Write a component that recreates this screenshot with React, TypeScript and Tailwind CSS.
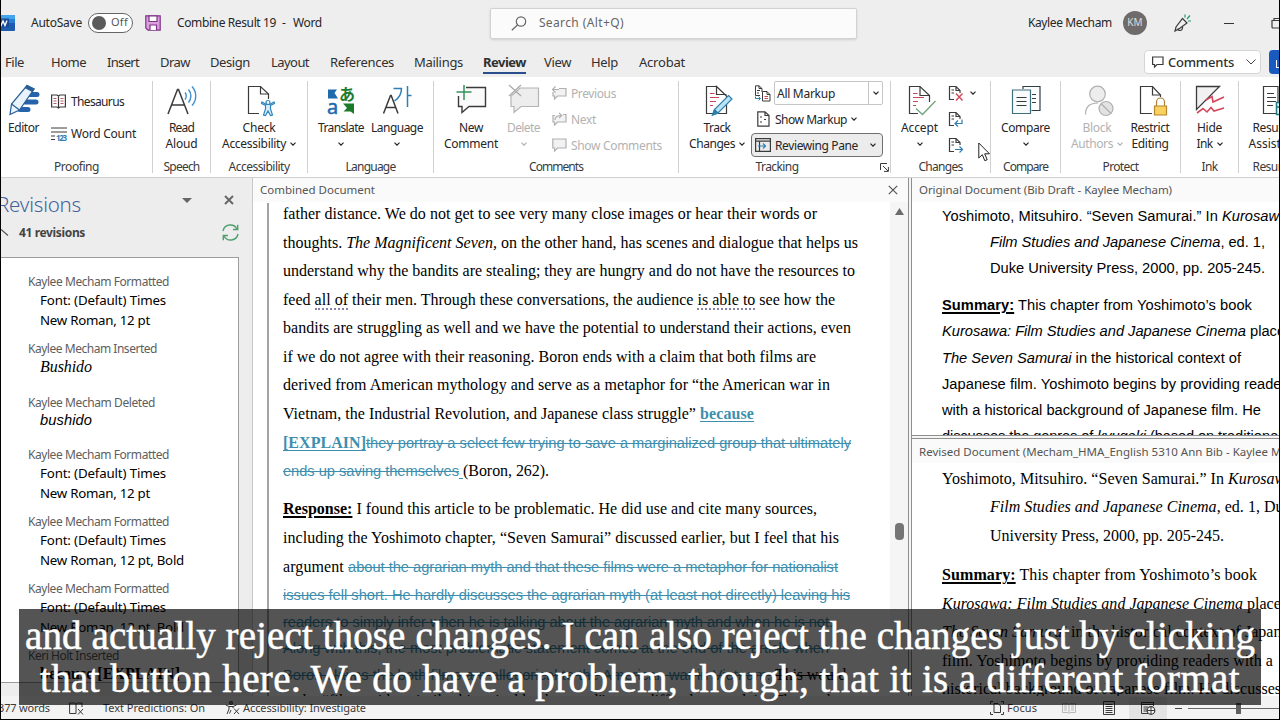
import { useLayoutEffect, useRef } from "react";
import type { ReactNode } from "react";
import clsx from "clsx";

// Tracks the letters in or out so that the run of text takes `w` pixels.
function Fit({ w, className, children }: { w: number; className?: string; children: ReactNode }) {
  const ref = useRef<HTMLSpanElement>(null);

  useLayoutEffect(() => {
    const el = ref.current;
    if (!el) return;
    el.style.letterSpacing = "0px";
    const natural = el.getBoundingClientRect().width;
    const count = el.textContent?.length || 1;
    el.style.letterSpacing = `${(w - natural) / count}px`;
  }, [w]);

  return (
    <span ref={ref} className={clsx("inline-block shrink-0 whitespace-pre", className)}>
      {children}
    </span>
  );
}

function Chevron({ className }: { className?: string }) {
  return (
    <svg width="6" height="4" viewBox="0 0 6 4" className={clsx("shrink-0", className)} fill="none" stroke="currentColor" strokeWidth="1.2">
      <path d="M0.5 0.7 3 3.2 5.5 0.7" />
    </svg>
  );
}

type IconProps = { w: number; h: number; className?: string; children: ReactNode };

function Icon({ w, h, className, children }: IconProps) {
  return (
    <svg width={w} height={h} viewBox={`0 0 ${w} ${h}`} className={clsx("shrink-0 overflow-visible", className)} fill="none" stroke="#3b3b3b" strokeWidth="1.2">
      {children}
    </svg>
  );
}

const EditorIcon = () => (
  <Icon w={32} h={32}>
    <path d="M20 10.500H29M17 18H28M12 25.500H20" stroke="#2564ac" strokeWidth="5" strokeLinecap="round" />
    <path d="M19 1.500 26 5 11.500 26 2 30.500 3.500 20Z" fill="#e9f3fb" stroke="#2b5f97" />
    <path d="M19 1.500 26 5 24.500 7.500 17.500 3.800Z" fill="#2b5f97" stroke="#2b5f97" />
    <path d="M3.500 20 11.500 26" stroke="#2b5f97" />
  </Icon>
);

const ReadAloudIcon = () => (
  <Icon w={32} h={32}>
    <path d="M2 30 11.500 5.500H12.500L22 30M5.500 21H18.500" strokeWidth="1.500" />
    <path d="M19 8.500a6 6 0 0 1 0 7M22.500 5.500a10 10 0 0 1 0 13M26 2.500a14 14 0 0 1 0 19" stroke="#3f8fd0" strokeWidth="1.400" />
  </Icon>
);

const AccessibilityIcon = () => (
  <Icon w={32} h={32}>
    <path d="M16 29.500H5.500V2.500H17.500L25.500 10V15" />
    <path d="M17.500 2.500V10H25.500" />
    <circle cx="25" cy="18.500" r="2" fill="#fff" stroke="#2f86bd" />
    <path d="M18.500 19.500 22.500 21.500V25L20.500 31 22.500 31.500 25 27 27.500 31.500 29.500 31 27.500 25V21.500L31.500 19.500 31 18 27 20.500H23L19 18Z" fill="#d9eefa" stroke="#2f86bd" />
  </Icon>
);

const TranslateIcon = () => (
  <Icon w={32} h={32}>
    <path d="M3 5.500H12L9.500 9 13 14.500H3Z" fill="#1f69ad" stroke="none" />
    <path d="M18 19.500H29V30L25.500 27.500H18.500L22 24Z" fill="#1c7a2b" stroke="none" />
    <text x="14" y="15.500" fill="#1c7a2b" stroke="none" fontSize="16" fontWeight="bold" fontFamily="Noto Sans CJK JP, sans-serif">あ</text>
    <text x="2" y="30" fill="#1f69ad" stroke="#1f69ad" strokeWidth="0.500" fontSize="20" fontFamily="Noto Sans, sans-serif">a</text>
  </Icon>
);

const LanguageIcon = () => (
  <Icon w={32} h={32}>
    <path d="M2.500 29.500 9.500 11.500H10.200L17 29.500M5 23.500H14.500" strokeWidth="1.500" />
    <path d="M12.500 4.500H20.500C20.500 10 18 14 13.500 17M26.500 2V23M26.500 11.500H30.500" stroke="#2f7fb5" strokeWidth="1.500" />
  </Icon>
);

const NewCommentIcon = () => (
  <Icon w={32} h={32}>
    <path d="M11 3.500H30.500V22.500H14L7 28.500V22.500H3.500V12" fill="#fafafa" strokeWidth="1.400" />
    <path d="M9 1V16M1.500 8H16.500" stroke="#36915a" strokeWidth="1.500" />
  </Icon>
);

const DeleteIcon = () => (
  <Icon w={32} h={32}>
    <path d="M3 12V22.500H6V28.500L13 22.500H30.500V4H12L8 8Z" fill="#ededed" stroke="#b4b4b4" />
    <path d="M1 1 13 12M13 1 1 12" stroke="#a8a8a8" />
  </Icon>
);

const TrackIcon = () => (
  <Icon w={32} h={32}>
    <path d="M15 2.500H5.500V29.500H25.500V12L15.500 2.500V10.500H25.500" />
    <path d="M9 9.500H13.500M9 13.500H18M9 17.500H15M9 21.500H12" stroke="#c84a5d" />
    <path d="M27.500 11.500 31 15 17 29 11.500 31 13.500 25.500Z" fill="#b9e3f7" stroke="#2d7fa8" />
    <path d="M11.500 31 13.500 25.500 17 29Z" fill="#2d7fa8" stroke="#2d7fa8" />
  </Icon>
);

const AcceptIcon = () => (
  <Icon w={32} h={32}>
    <path d="M14 29.500H5.500V2.500H16L25.500 11.500V18" />
    <path d="M16 2.500V11.500H25.500" />
    <path d="M9 9.500H13.500M9 13.500H20M9 17.500H14M9 21.500H12" stroke="#c84a5d" />
    <path d="M12 24.500 18.500 30.500 31.500 17" stroke="#74a67d" strokeWidth="1.400" />
  </Icon>
);

const CompareIcon = () => (
  <Icon w={32} h={32}>
    <path d="M13 5V2.500H30V26.500H21.500M22 10.500H26M22 14.500H26M22 18.500H26" stroke="#2f4048" />
    <path d="M2.500 6H20.500V29.500H2.500Z" fill="#f8fbfc" stroke="#3d6f7c" />
    <path d="M6.500 13.500H16.500M6.500 17.500H16.500M6.500 21.500H16.500" />
  </Icon>
);

const BlockIcon = () => (
  <Icon w={32} h={32}>
    <circle cx="16.500" cy="10" r="7.800" fill="#ededed" stroke="#b0b0b0" />
    <path d="M4.500 30.500C4.500 22 9.500 19 17 19" stroke="#b0b0b0" />
    <circle cx="25" cy="24.500" r="7" fill="#e2e2e2" stroke="#b0b0b0" />
    <path d="M20 19.500 30 29.500" stroke="#b0b0b0" />
  </Icon>
);

const RestrictIcon = () => (
  <Icon w={32} h={32}>
    <path d="M18 29.500H6.500V2.500H18.500L26.500 11V13" />
    <path d="M18.500 2.500V11H26.500" />
    <path d="M22.500 22V18a4 4 0 0 1 8 0V22" stroke="#a8843a" />
    <path d="M20.500 22H32.500V31H20.500Z" fill="#f8d15e" stroke="#b8862c" />
  </Icon>
);

const HideInkIcon = () => (
  <Icon w={32} h={32}>
    <path d="M2.500 25.500V2.500H25.500Z" fill="#f1f1f1" strokeWidth="1.300" />
    <path d="M3 29 9 24.500 13 28 17 23.500 20 27 30 24M12 16 18 12.500 19 18 30 13" stroke="#d4475a" strokeWidth="1.600" />
  </Icon>
);

const ResumeIcon = () => (
  <Icon w={32} h={32}>
    <path d="M5.500 2.500H20V29.500H5.500ZM9 9.500H16M9 13.500H18M9 17.500H18M9 21.500H15" />
    <path d="M18.500 18.500H31V30.500H18.500ZM18.500 23H31" fill="#e6f4f5" stroke="#227883" strokeWidth="1.500" />
  </Icon>
);

const PageOutline = () => <path d="M6 14.500H1.500V1.500H8L12 5.500V8M8 1.500V5.500H12" />;

type Label = { text: string; w: number };

type BigButtonProps = {
  icon: ReactNode;
  width: string;
  first: Label;
  second?: Label;
  chevron?: boolean;
  disabled?: boolean;
};

function BigButton({ icon, width, first, second, chevron, disabled }: BigButtonProps) {
  return (
    <button className={clsx("flex shrink-0 flex-col items-center pt-[3px] leading-4", width, disabled ? "text-[#b2b2b2]" : "text-[#262626]")}>
      {icon}
      <Fit w={first.w} className="mt-1">{first.text}</Fit>
      <span className="flex h-4 items-center justify-center gap-1">
        {second && <Fit w={second.w}>{second.text}</Fit>}
        {chevron && <Chevron />}
      </span>
    </button>
  );
}

function Group({ label, w, width, pad, children, extra }: { label: string; w: number; width: string; pad?: string; children: ReactNode; extra?: ReactNode }) {
  return (
    <section className={clsx("flex h-[92px] shrink-0 flex-col border-r border-[#d0d0d0]", width)}>
      <div className={clsx("flex h-[78px] shrink-0", pad ?? "justify-center")}>{children}</div>
      <div className="flex h-4 shrink-0 items-center justify-center text-[#3a3a3a]">
        <Fit w={w} className="leading-4">{label}</Fit>
        {extra}
      </div>
    </section>
  );
}

const tabs = [
  { name: "File", w: 19, gap: "ml-1" },
  { name: "Home", w: 35, gap: "ml-[27px]" },
  { name: "Insert", w: 32, gap: "ml-[21px]" },
  { name: "Draw", w: 30, gap: "ml-[21px]" },
  { name: "Design", w: 40, gap: "ml-5" },
  { name: "Layout", w: 38, gap: "ml-[21px]" },
  { name: "References", w: 64, gap: "ml-[21px]" },
  { name: "Mailings", w: 49, gap: "ml-5" },
  { name: "Review", w: 43, gap: "ml-5", active: true },
  { name: "View", w: 27, gap: "ml-[18px]" },
  { name: "Help", w: 27, gap: "ml-5" },
  { name: "Acrobat", w: 46, gap: "ml-[21px]" },
];

function TitleBar() {
  return (
    <header className="flex h-[46px] shrink-0 items-center text-xs text-[#262626]">
      <svg width="14" height="16" viewBox="0 0 14 16" className="shrink-0">
        <path d="M0 0H13a1 1 0 0 1 1 1V15a1 1 0 0 1-1 1H0Z" fill="#1f5cb0" />
        <path d="M0 0H13a1 1 0 0 1 1 1V4.500H0Z" fill="#41a5ee" />
        <path d="M0 4.500H14V8H0Z" fill="#2b7cd3" />
        <path d="M0 3.500H8V12.500H0Z" fill="#174a96" />
        <path d="M-2 5.500 0 10.500 2 6 4 10.500 6 5.500" fill="none" stroke="#fff" strokeWidth="1.400" />
      </svg>
      <Fit w={51} className="ml-4">AutoSave</Fit>
      <div className="-mt-px ml-[6px] flex h-[20px] w-[45px] shrink-0 items-center rounded-full border border-[#666] bg-white pl-[3px] text-[11px] text-[#555]">
        <span className="mr-[5px] size-[14px] rounded-full bg-[#5c5c5c]" />
        <Fit w={17}>Off</Fit>
      </div>
      <Icon w={16} h={16} className="ml-3">
        <path d="M0.800 0.800H15.200V15.200H3L0.800 13Z" fill="#d9a0dc" stroke="#7f3389" />
        <path d="M4 0.800H12V6.500H4ZM5 15V10H11.500V15" fill="#fff" stroke="#7f3389" />
      </Icon>
      <Fit w={99} className="ml-4">Combine Result 19</Fit>
      <span className="ml-[6px]">-</span>
      <Fit w={29} className="ml-[7px]">Word</Fit>
      <div className="ml-[168px] flex h-[31px] w-[367px] shrink-0 items-center rounded-xs border border-[#d2d2d2] bg-[#fbfbfb] pl-5 text-[#666] shadow-sm">
        <Icon w={16} h={15}>
          <circle cx="10" cy="5.500" r="4.700" stroke="#666" />
          <path d="M6.500 9 0.800 14.300" stroke="#666" />
        </Icon>
        <Fit w={85} className="ml-3">Search (Alt+Q)</Fit>
      </div>
      <Fit w={84} className="ml-[171px]">Kaylee Mecham</Fit>
      <div className="ml-[11px] flex size-6 shrink-0 items-center justify-center rounded-full bg-[#6f6b6b] text-[10px] text-[#ddd]">KM</div>
      <Icon w={18} h={18} className="ml-[27px]">
        <path d="M8.500 4.500 13 9 5.500 14.500 1 17 2 13Z" />
        <path d="M4 14.500C4 17 8 17.500 8.500 14V12.500" />
        <path d="M11 3.500V0.500M13 5 16 1.500M14 7H17" stroke="#26966b" />
      </Icon>
      <span className="ml-[32px] h-px w-[10px] shrink-0 bg-[#333]" />
      <Icon w={12} h={12} className="ml-[37px]">
        <path d="M1 3.500H9V11H2a1 1 0 0 1-1-1ZM3 3V1.500H12" />
      </Icon>
    </header>
  );
}

function TabBar() {
  return (
    <nav className="flex h-[31px] shrink-0 items-start text-[13px] text-[#303030]">
      {tabs.map((t) => (
        <span key={t.name} className={clsx("flex h-[30px] shrink-0 flex-col pt-[7px]", t.gap)}>
          <Fit w={t.w} className={clsx("leading-[18px]", t.active && "font-bold")}>{t.name}</Fit>
          {t.active && <span className="mt-px h-[2px] bg-[#2b4f8c]" />}
        </span>
      ))}
      <button className="mt-1 ml-[459px] flex h-[24px] w-[117px] shrink-0 items-center rounded border border-[#d5d5d5] bg-white pl-[7px] font-medium">
        <Icon w={12} h={12}>
          <path d="M0.600 1H11V8.500H5L2.500 11V8.500H0.600Z" />
        </Icon>
        <Fit w={66} className="ml-1 pt-px">Comments</Fit>
        <svg width="10" height="6" viewBox="0 0 10 6" className="ml-3" fill="none" stroke="#444">
          <path d="M0.500 0.500 5 5 9.500 0.500" />
        </svg>
      </button>
      <span className="mt-1 ml-2 flex h-[24px] w-[12px] shrink-0 items-center rounded-l bg-[#185abd] pl-[7px]">
        <span className="mt-1 h-2 w-[5px] border-b border-l border-white" />
      </span>
    </nav>
  );
}

function Ribbon() {
  return (
    <div className="flex h-[101px] shrink-0 overflow-hidden border-b border-[#cfcfcf] bg-white pt-1 text-[12px]">
      <Group label="Proofing" w={45} width="w-[152px]" pad="pl-1">
        <BigButton icon={<EditorIcon />} width="w-[37px]" first={{ text: "Editor", w: 31 }} />
        <div className="ml-[9px] flex flex-col gap-4 pt-[13px] leading-4 text-[#262626]">
          <span className="flex h-4 items-center">
            <Icon w={15} h={15} className="-mt-px">
              <path d="M0.600 1H6L7.500 2 9 1H14.400V13H9L7.500 14 6 13H0.600ZM7.500 2V14" />
              <path d="M2.500 4.500H5.500M2.500 7H5.500M2.500 9.500H5.500M9.500 4.500H12.500M9.500 7H12.500M9.500 9.500H12.500" stroke="#b05a6c" strokeWidth="1" />
            </Icon>
            <Fit w={53} className="ml-[5px]">Thesaurus</Fit>
          </span>
          <span className="flex h-4 items-center">
            <Icon w={17} h={14} className="-mt-px">
              <path d="M0 1H16M0 5H16M0 9H4M0 12.500H4" strokeWidth="1" />
              <text x="5" y="13.500" fill="#2f7fb5" stroke="none" fontSize="8" fontWeight="bold" fontFamily="Noto Sans, sans-serif" textLength="11">123</text>
            </Icon>
            <Fit w={65} className="ml-[3px]">Word Count</Fit>
          </span>
        </div>
      </Group>

      <Group label="Speech" w={36} width="w-[58px]">
        <BigButton icon={<ReadAloudIcon />} width="w-[56px]" first={{ text: "Read", w: 25 }} second={{ text: "Aloud", w: 32 }} />
      </Group>

      <Group label="Accessibility" w={61} width="w-[97px]">
        <BigButton icon={<AccessibilityIcon />} width="w-[90px]" first={{ text: "Check", w: 33 }} second={{ text: "Accessibility", w: 64 }} chevron />
      </Group>

      <Group label="Language" w={50} width="w-[126px]" pad="pl-[5px]">
        <BigButton icon={<TranslateIcon />} width="w-14" first={{ text: "Translate", w: 46 }} chevron />
        <BigButton icon={<LanguageIcon />} width="w-14" first={{ text: "Language", w: 52 }} chevron />
      </Group>

      <Group label="Comments" w={54} width="w-[245px]" pad="pl-[9px]">
        <BigButton icon={<NewCommentIcon />} width="w-14" first={{ text: "New", w: 24 }} second={{ text: "Comment", w: 54 }} />
        <BigButton icon={<DeleteIcon />} width="w-[49px]" first={{ text: "Delete", w: 33 }} chevron disabled />
        <div className="ml-1 flex flex-col leading-4 text-[#b2b2b2]">
          <span className="flex h-[26px] items-center">
            <Icon w={15} h={14} className="-mt-[3px]">
              <path d="M7 2.500H14V10H5.500L2.500 13V10H1V6" fill="#f2f2f2" stroke="#b0b0b0" />
              <path d="M0.500 3.500H7M3.500 0.500 0.500 3.500 3.500 6.500" stroke="#b0b0b0" />
            </Icon>
            <Fit w={45} className="ml-1">Previous</Fit>
          </span>
          <span className="flex h-[26px] items-center">
            <Icon w={15} h={14} className="-mt-[3px]">
              <path d="M11 2.500H14V10H5.500L2.500 13V10H1V3.500H3" fill="#f2f2f2" stroke="#b0b0b0" />
              <path d="M3 8C3 5 5 3.500 9.500 3.500M7 0.800 9.700 3.500 7 6.200" stroke="#b0b0b0" />
            </Icon>
            <Fit w={25} className="ml-1">Next</Fit>
          </span>
          <span className="flex h-[26px] items-center">
            <Icon w={15} h={14} className="-mt-[3px]">
              <path d="M0.800 1H14V10H5.500L2.500 13V10H0.800Z" fill="#f2f2f2" stroke="#b0b0b0" />
            </Icon>
            <Fit w={91} className="ml-1">Show Comments</Fit>
          </span>
        </div>
      </Group>

      <Group
        label="Tracking"
        w={43}
        width="w-[212px]"
        pad="pl-2"
        extra={
          <Icon w={9} h={9} className="-mr-[75px] ml-[81px]">
            <path d="M0.500 7V0.500H7M3 3 8 8M8.400 4V8.400H4" strokeWidth="1" />
          </Icon>
        }
      >
        <BigButton icon={<TrackIcon />} width="w-[60px]" first={{ text: "Track", w: 27 }} second={{ text: "Changes", w: 46 }} chevron />
        <div className="ml-1 flex w-[132px] flex-col text-[#262626]">
          <div className="flex h-6 items-center pl-[3px]">
            <Icon w={17} h={17}>
              <path d="M6 10.500H1.500V0.800H5L8 3.500V7M5 0.800V3.500H8" strokeWidth="1" />
              <path d="M3 5.500H6M3 8H5" strokeWidth="1" />
              <path d="M8.500 6.500H13L16 9.500V16H8.500ZM13 6.500V9.500H16" fill="#fff" strokeWidth="1" />
              <path d="M10.500 11.500H14M10.500 13.500H14" stroke="#c84a5d" strokeWidth="1" />
              <path d="M1.500 11.500V13.500H6.500M4.500 11.500 6.500 13.500 4.500 15.500" stroke="#2f7fb5" strokeWidth="1" />
            </Icon>
            <div className="ml-[3px] flex h-6 w-[109px] items-center rounded-xs border border-[#c6c6c6] bg-white pl-[2px]">
              <Fit w={58} className="pt-[2px]">All Markup</Fit>
              <span className="ml-[33px] h-[22px] w-px bg-[#c6c6c6]" />
              <Chevron className="ml-[4px]" />
            </div>
          </div>
          <div className="flex h-[28px] items-center pl-[6px]">
            <Icon w={13} h={16}>
              <path d="M0.800 0.800H8L12 4.500V15.200H0.800ZM8 0.800V4.500H12" />
              <path d="M3 6H5M7 8.500H9M3 11H5" />
            </Icon>
            <Fit w={72} className="ml-[5px] pt-[2px]">Show Markup</Fit>
            <Chevron className="ml-1" />
          </div>
          <div className="flex h-[24px] items-center rounded border border-[#707070] bg-[#ececec] pl-[3px]">
            <Icon w={16} h={14}>
              <path d="M0.600 0.600H15.400V13.400H0.600ZM0.600 3.200H15.400M4.500 3.200V13" />
              <path d="M3 8H10.500M8 5.500 10.500 8 8 10.500" stroke="#2f7fb5" />
            </Icon>
            <Fit w={83} className="ml-1 pt-[2px]">Reviewing Pane</Fit>
            <Chevron className="ml-3" />
          </div>
        </div>
      </Group>

      <Group label="Changes" w={44} width="w-[100px]" pad="pl-[6px]">
        <BigButton icon={<AcceptIcon />} width="w-[45px]" first={{ text: "Accept", w: 37 }} chevron />
        <div className="-mt-px ml-[6px] flex flex-col text-[#262626]">
          <span className="flex h-[26px] items-center">
            <Icon w={16} h={16}>
              <PageOutline />
              <path d="M3.500 5H6M3.500 8H6" strokeWidth="1" />
              <path d="M8 8.500 14.500 15.500M14.500 8.500 8 15.500" stroke="#d4475a" strokeWidth="1.400" />
            </Icon>
            <Chevron className="ml-[6px]" />
          </span>
          <span className="flex h-[26px] items-center">
            <Icon w={16} h={16}>
              <PageOutline />
              <path d="M3.500 5H6M3.500 8H6" strokeWidth="1" />
              <path d="M14 8.500V12.500H7M10 9.500 7 12.500 10 15.500" stroke="#2f7fb5" />
            </Icon>
          </span>
          <span className="flex h-[26px] items-center">
            <Icon w={16} h={16}>
              <PageOutline />
              <path d="M3.500 5H6M3.500 8H6" strokeWidth="1" />
              <path d="M7 12.500H14.500M11.500 9.500 14.500 12.500 11.500 15.500" stroke="#2f7fb5" />
            </Icon>
          </span>
        </div>
      </Group>

      <Group label="Compare" w={45} width="w-[70px]">
        <BigButton icon={<CompareIcon />} width="w-[60px]" first={{ text: "Compare", w: 49 }} chevron />
      </Group>

      <Group label="Protect" w={36} width="w-[120px]" pad="pl-2">
        <BigButton icon={<BlockIcon />} width="w-14" first={{ text: "Block", w: 29 }} second={{ text: "Authors", w: 42 }} chevron disabled />
        <BigButton icon={<RestrictIcon />} width="w-[50px]" first={{ text: "Restrict", w: 39 }} second={{ text: "Editing", w: 37 }} />
      </Group>

      <Group label="Ink" w={16} width="w-[58px]">
        <BigButton icon={<HideInkIcon />} width="w-[50px]" first={{ text: "Hide", w: 25 }} second={{ text: "Ink", w: 16 }} chevron />
      </Group>

      <Group label="Resume" w={42} width="w-[70px]" pad="pl-[10px]">
        <BigButton icon={<ResumeIcon />} width="w-[50px]" first={{ text: "Resume", w: 43 }} second={{ text: "Assistant", w: 51 }} />
      </Group>
    </div>
  );
}

const FONT_CHANGE = [
  { text: "Font: (Default) Times", w: 126 },
  { text: "New Roman, 12 pt", w: 110 },
];
const FONT_CHANGE_BOLD = [FONT_CHANGE[0], { text: "New Roman, 12 pt, Bold", w: 144 }];

const revisions = [
  { who: "Kaylee Mecham Formatted", w: 141, lines: FONT_CHANGE, height: "h-[67px]" },
  { who: "Kaylee Mecham Inserted", w: 129, lines: [{ text: "Bushido", w: 52 }], height: "h-[54px]", font: "font-['Liberation_Serif',serif] italic text-[16px]" },
  { who: "Kaylee Mecham Deleted", w: 127, lines: [{ text: "bushido", w: 52 }], height: "h-[52px]", font: "font-['Liberation_Sans',sans-serif] italic text-[14.67px] -mt-px" },
  { who: "Kaylee Mecham Formatted", w: 141, lines: FONT_CHANGE, height: "h-[67px]" },
  { who: "Kaylee Mecham Formatted", w: 141, lines: FONT_CHANGE_BOLD, height: "h-[67px]" },
  { who: "Kaylee Mecham Formatted", w: 141, lines: FONT_CHANGE_BOLD, height: "h-[67px]" },
  { who: "Keri Holt Inserted", w: 91, lines: [{ text: "because [EXPLAIN]", w: 140 }], height: "h-[54px]", font: "font-['Liberation_Serif',serif] font-bold text-[16px]" },
];

function RevisionsPane() {
  return (
    <aside className="flex w-[252px] shrink-0 flex-col border-r border-[#c8c8c8] bg-[#ededed]">
      <div className="flex h-[46px] items-center pt-[5px]">
        <Fit w={84} className="-ml-1 text-[20.5px] leading-6 font-light text-[#44639c]">Revisions</Fit>
        <svg width="10" height="5" viewBox="0 0 10 5" className="mb-[6px] ml-[101px]">
          <path d="M0 0H10L5 5Z" fill="#666" />
        </svg>
        <Icon w={10} h={10} className="mb-[8px] ml-[32px]">
          <path d="M1 1 9 9M9 1 1 9" stroke="#666" strokeWidth="1.900" />
        </Icon>
      </div>
      <div className="flex h-[17px] items-center text-xs font-bold text-[#444]">
        <Icon w={8} h={7}>
          <path d="M0 0.500 7 6.500" stroke="#555" />
        </Icon>
        <Fit w={66} className="ml-[10px] pt-px">41 revisions</Fit>
        <Icon w={17} h={17} className="ml-[137px]">
          <path d="M1 7A7.500 7.500 0 0 1 15 5M16 10A7.500 7.500 0 0 1 2 12M15.700 0.800V5.500H11M1.300 16.200V11.500H6" stroke="#4fa06e" strokeWidth="1.400" />
        </Icon>
      </div>
      <div className="mt-4 h-[426px] w-[238px] overflow-hidden border-y border-r border-[#9c9c9c] bg-white pt-[15px] text-[13.3px] text-black">
        {revisions.map((r, i) => (
          <div key={i} className={clsx("flex flex-col pl-[27px]", r.height)}>
            <Fit w={r.w} className="h-[17px] self-start text-[12px] leading-[18px] text-[#5e5e5e]">{r.who}</Fit>
            {r.lines.map((l) => (
              <Fit key={l.text} w={l.w} className={clsx("ml-3 h-5 self-start leading-5", r.font)}>{l.text}</Fit>
            ))}
          </div>
        ))}
      </div>
    </aside>
  );
}

function Struck({ w, children }: { w: number; children: ReactNode }) {
  return (
    <Fit w={w} className="font-['Liberation_Sans',sans-serif] text-[14.67px] text-[#3e8fae] line-through">
      {children}
    </Fit>
  );
}

const pitches = {
  loose: "h-[28.6px] leading-[28.6px]",
  struck: "h-[26.5px] leading-[28.6px]",
  tight: "h-[26.1px] leading-[26.1px]",
};

function Line({ pitch = "loose", className, children }: { pitch?: keyof typeof pitches; className?: string; children: ReactNode }) {
  return <div className={clsx("whitespace-nowrap", pitches[pitch], className)}>{children}</div>;
}

const grammar = "border-b-2 border-dotted border-[#8583a8]";

function CombinedDocument() {
  return (
    <main className="flex w-[655px] shrink-0 flex-col bg-white">
      <div className="flex h-6 shrink-0 items-center bg-[#fafafa] pl-[7px] text-[11.5px] text-[#555]">
        <Fit w={115}>Combined Document</Fit>
        <Icon w={10} h={10} className="ml-[513px]">
          <path d="M0.800 0.800 9.200 9.200M9.200 0.800 0.800 9.200" stroke="#555" />
        </Icon>
      </div>
      <div className="flex h-[494px] overflow-hidden">
        <div className="mt-px ml-[14px] w-[2px] shrink-0 bg-[#a3a3a3]" />
        <div className="-mt-[2.1px] ml-[14px] w-[607px] shrink-0 font-['Liberation_Serif',serif] text-[16px] text-black">
          <Line><Fit w={534}>father distance. We do not get to see very many close images or hear their words or</Fit></Line>
          <Line><Fit w={575}>thoughts. <i>The Magnificent Seven,</i> on the other hand, has scenes and dialogue that helps us</Fit></Line>
          <Line><Fit w={572}>understand why the bandits are stealing; they are hungry and do not have the resources to</Fit></Line>
          <Line><Fit w={552}>feed <span className={grammar}>all of</span> their men. Through these conversations, the audience <span className={grammar}>is able to</span> see how the</Fit></Line>
          <Line><Fit w={568}>bandits are struggling as well and we have the potential to understand their actions, even</Fit></Line>
          <Line><Fit w={533}>if we do not agree with their reasoning. Boron ends with a claim that both films are</Fit></Line>
          <Line><Fit w={547}>derived from American mythology and serve as a metaphor for “the American war in</Fit></Line>
          <Line>
            <Fit w={417}>Vietnam, the Industrial Revolution, and Japanese class struggle” </Fit>
            <Fit w={54} className="font-bold text-[#3e8fae] underline underline-offset-2">because</Fit>
          </Line>
          <Line>
            <Fit w={83} className="font-bold text-[#3e8fae] underline underline-offset-2">[EXPLAIN]</Fit>
            <Struck w={485}>they portray a select few trying to save a marginalized group that ultimately</Struck>
          </Line>
          <Line className="mb-[9.6px]">
            <Struck w={176}>ends up saving themselves</Struck>
            <span className="whitespace-pre text-[#3e8fae] underline underline-offset-2"> </span>
            <Fit w={86}>(Boron, 262).</Fit>
          </Line>
          <Line><Fit w={534}><b className="underline decoration-2 underline-offset-2">Response:</b> I found this article to be problematic. He did use and cite many sources,</Fit></Line>
          <Line><Fit w={556}>including the Yoshimoto chapter, “Seven Samurai” discussed earlier, but I feel that his</Fit></Line>
          <Line>
            <Fit w={65}>argument </Fit>
            <Struck w={490}>about the agrarian myth and that these films were a metaphor for nationalist</Struck>
          </Line>
          <Line pitch="struck">
            <Struck w={567}>issues fell short. He hardly discusses the agrarian myth (at least not directly) leaving his</Struck>
          </Line>
          <Line pitch="struck">
            <Struck w={550}>readers to simply infer when he is talking about the agrarian myth and when he is not.</Struck>
          </Line>
          <Line pitch="struck">
            <Struck w={546}>Along with this, the most problematic statement comes at the end of the article when</Struck>
          </Line>
          <Line pitch="struck">
            <Struck w={492}>Boron claims the both films are allegorical to the American war in Vietnam. </Struck>
            <Fit w={71} className="line-through">This would</Fit>
          </Line>
          <Line><Fit w={560}>make “films with a similar historical background” more difficult to explain. The reader</Fit></Line>
        </div>
        <div className="flex w-[18px] shrink-0 flex-col items-center bg-[#f5f5f5] pt-[6px]">
          <svg width="9" height="7" viewBox="0 0 9 7">
            <path d="M4.500 0 9 7H0Z" fill="#6b6b6b" />
          </svg>
          <span className="mt-[308px] h-[17px] w-[9px] rounded bg-[#757575]" />
        </div>
      </div>
    </main>
  );
}

function SourceDocuments() {
  return (
    <div className="flex min-w-0 flex-1 flex-col overflow-hidden">
      <section className="h-[257px] shrink-0 overflow-hidden bg-white">
        <div className="flex h-6 items-center bg-[#fafafa] pl-[7px] text-[11.5px] text-[#555]">
          <Fit w={253}>Original Document (Bib Draft - Kaylee Mecham)</Fit>
        </div>
        <div className="mt-[1.2px] pl-[30px] font-['Liberation_Sans',sans-serif] text-[14.67px] text-black">
          <Line pitch="tight"><Fit w={280}>Yoshimoto, Mitsuhiro. “Seven Samurai.” In </Fit><i>Kurosawa:</i></Line>
          <Line pitch="tight" className="pl-12"><Fit w={275}><i>Film Studies and Japanese Cinema</i>, ed. 1,</Fit></Line>
          <Line pitch="tight" className="mb-[10.9px] pl-12"><Fit w={275}>Duke University Press, 2000, pp. 205-245.</Fit></Line>
          <Line pitch="tight"><Fit w={310}><b className="underline decoration-2 underline-offset-2">Summary:</b> This chapter from Yoshimoto’s book</Fit></Line>
          <Line pitch="tight"><Fit w={308}><i>Kurosawa: Film Studies and Japanese Cinema</i> </Fit>places</Line>
          <Line pitch="tight"><Fit w={299}><i>The Seven Samurai</i> in the historical context of</Fit></Line>
          <Line pitch="tight"><Fit w={302}>Japanese film. Yoshimoto begins by providing </Fit>readers</Line>
          <Line pitch="tight"><Fit w={319}>with a historical background of Japanese film. He</Fit></Line>
          <Line pitch="tight"><Fit w={276}>discusses the genres of <i>kyugeki</i> (based on </Fit>traditional</Line>
        </div>
      </section>
      <div className="h-1 shrink-0 border-y border-[#8f8f8f] bg-[#f5f5f5]" />
      <section className="flex-1 bg-white">
        <div className="flex h-6 items-center bg-[#fafafa] pt-[2px] pl-[7px] text-[11.5px] text-[#555]">
          <Fit w={352}>Revised Document (Mecham_HMA_English 5310 Ann Bib - Kaylee </Fit>
          <span>Mecham)</span>
        </div>
        <div className="mt-[1.9px] pl-[30px] font-['Liberation_Serif',serif] text-[16px] text-black">
          <Line><Fit w={286}>Yoshimoto, Mitsuhiro. “Seven Samurai.” In </Fit><i>Kurosawa:</i></Line>
          <Line className="pl-12"><Fit w={274}><i>Film Studies and Japanese Cinema</i>, ed. 1, </Fit>Duke</Line>
          <Line className="mb-[10.4px] pl-12"><Fit w={234}>University Press, 2000, pp. 205-245.</Fit></Line>
          <Line><Fit w={315}><b className="underline decoration-2 underline-offset-2">Summary:</b> This chapter from Yoshimoto’s book</Fit></Line>
          <Line><Fit w={305}><i>Kurosawa: Film Studies and Japanese Cinema</i> </Fit>places</Line>
          <Line><Fit w={303}><i>The Seven Samurai</i> in the historical context of </Fit>Japanese</Line>
          <Line><Fit w={331}>film. Yoshimoto begins by providing readers with a</Fit></Line>
          <Line><Fit w={339}>historical background of Japanese film. He discusses</Fit></Line>
        </div>
      </section>
    </div>
  );
}

function StatusBar() {
  return (
    <footer className="flex h-[23px] shrink-0 items-center bg-[#f3f3f3] pt-px text-[11px] text-[#3a3a3a]">
      <Fit w={52} className="-ml-[3px]">377 words</Fit>
      <Icon w={15} h={13} className="ml-[19px]">
        <path d="M7 2V11.500H0.600V1H5.500L7 2 8.500 1H13V5M9 7 14 12.500M14 7 9 12.500" strokeWidth="1" />
      </Icon>
      <Fit w={102} className="ml-[19px] pt-px">Text Predictions: On</Fit>
      <Icon w={15} h={14} className="ml-5">
        <circle cx="6" cy="2" r="1.400" />
        <path d="M0.800 4 4 5.500V8L2 13M11.500 4 8 5.500H4M8 5.500V7M6 9 4.500 12.500M9 7.500 14 13M14 7.500 9 13" strokeWidth="1" />
      </Icon>
      <Fit w={123} className="ml-[3px]">Accessibility: Investigate</Fit>
      <Icon w={14} h={14} className="ml-[624px]">
        <path d="M3 0.500H0.500V3M11 0.500H13.500V3M3 13.500H0.500V11M11 13.500H13.500V11M4 2.500H8L10.500 5V11.500H4Z" strokeWidth="1" />
      </Icon>
      <Fit w={30} className="ml-[3px] pt-px">Focus</Fit>
      <Icon w={14} h={11} className="ml-[25px]">
        <path d="M0.500 0.500H6L7 1.500 8 0.500H13.500V9.500H8L7 10.500 6 9.500H0.500ZM7 1.500V10M2 3H5M2 5H5M2 7H5M9 3H12M9 5H12M9 7H12" stroke="#b9b9b9" strokeWidth="1" />
      </Icon>
      <Icon w={12} h={14} className="ml-[27px]">
        <path d="M0.500 0.500H11.500V13.500H0.500ZM2.500 3.500H9.500M2.500 5.500H9.500M2.500 7.500H9.500M2.500 9.500H9.500M2.500 11.500H9.500" strokeWidth="1" />
      </Icon>
      <span className="ml-[14px] flex h-full w-[38px] items-center justify-center bg-[#e3e3e3]">
        <Icon w={15} h={13}>
          <path d="M7 11.500H0.500V0.500H12.500V4M0.500 2.500H12M2.500 5H7M2.500 7H6M2.500 9H6" strokeWidth="1" />
          <circle cx="10" cy="8.500" r="3.800" fill="#f3f3f3" />
          <path d="M6 8.500H14M10 5V12" strokeWidth="1" />
        </Icon>
      </span>
      <span className="ml-[8px] h-px w-[7px] shrink-0 bg-[#444]" />
      <span className="ml-[6px] h-px w-12 shrink-0 bg-[#666]" />
      <span className="h-[11px] w-[5px] shrink-0 bg-[#5f5f5f]" />
      <span className="h-px flex-1 bg-[#666]" />
    </footer>
  );
}

export default function App() {
  return (
    <div className="relative flex h-[720px] w-[1280px] flex-col overflow-hidden border-x border-b border-black bg-[#eeeeee] font-['Noto_Sans','Open_Sans',sans-serif]">
      <TitleBar />
      <TabBar />
      <Ribbon />
      <div className="flex h-[518px] shrink-0">
        <RevisionsPane />
        <CombinedDocument />
        <div className="w-1 shrink-0 border-x border-[#8f8f8f] bg-[#f5f5f5]" />
        <SourceDocuments />
      </div>
      <StatusBar />

      {/* Mouse pointer */}
      <svg width="13" height="20" viewBox="0 0 13 20" className="absolute top-[142px] left-[977px]">
        <path d="M0.800 1V16L4.300 12.700 6.800 18.700 9.200 17.700 6.700 11.800H11.500Z" fill="#fff" stroke="#222" />
      </svg>

      {/* Caption */}
      <div className="absolute top-[609px] left-[18px] flex h-[96px] w-[1242px] flex-col items-center bg-black/67 pt-[6px] font-['Liberation_Serif',serif] text-[39px] leading-[42.5px] text-white [-webkit-text-stroke:0.5px_white]">
        <Fit w={1230}>and actually reject those changes. I can also reject the changes just by clicking</Fit>
        <Fit w={1200}>that button here. We do have a problem, though, that it is a different format</Fit>
      </div>
    </div>
  );
}
